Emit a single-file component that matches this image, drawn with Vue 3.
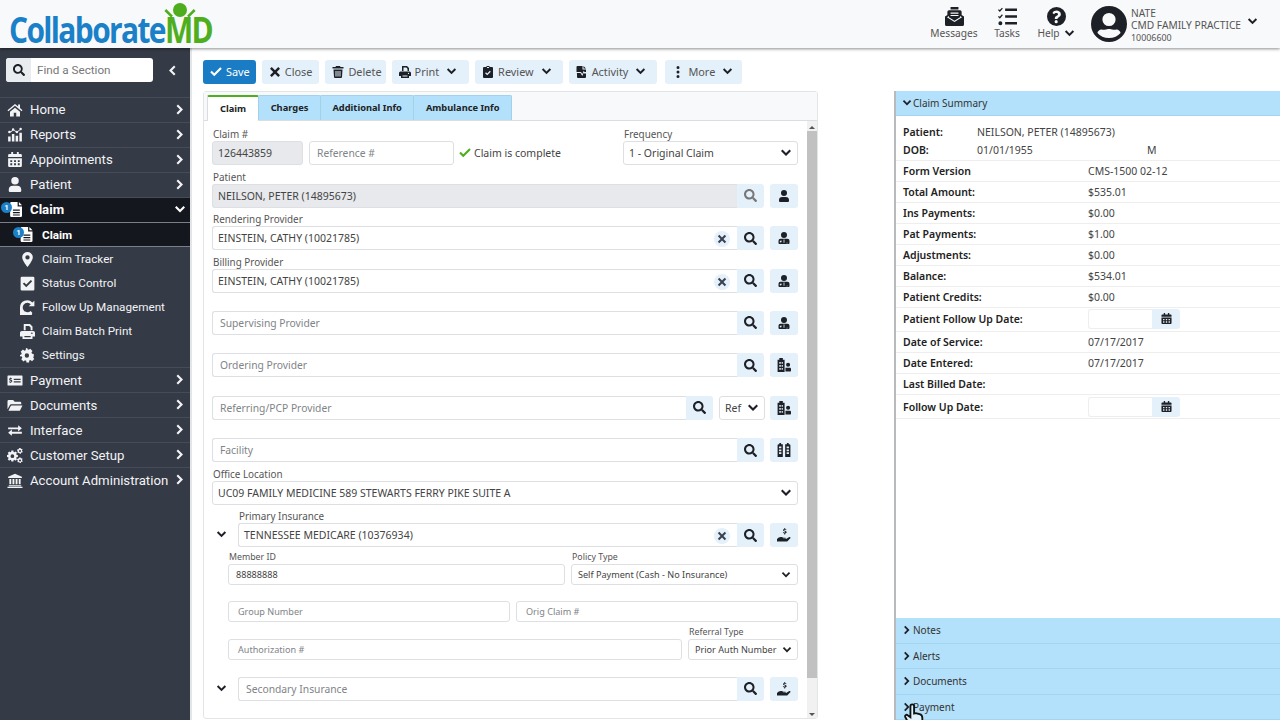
<script setup>
const ic = {
  search: 'M23.7 20.7l-4.7-4.7c-.2-.2-.5-.3-.8-.3h-.8c1.3-1.7 2.1-3.7 2.1-6C19.5 4.4 15.1 0 9.8 0S0 4.4 0 9.8s4.4 9.8 9.8 9.8c2.3 0 4.3-.8 6-2.1v.8c0 .3.1.6.3.8l4.7 4.7c.4.4 1.2.4 1.6 0l1.3-1.3c.4-.5.4-1.2 0-1.8zM9.8 15.8c-3.3 0-6-2.7-6-6s2.7-6 6-6 6 2.7 6 6-2.7 6-6 6z',
  home: 'M12 3L0 13l1.4 1.7L12 6l10.6 8.7L24 13l-4-3.3V4h-3v3.2zM4 15.5V23h6v-6h4v6h6v-7.5L12 9z',
  reports: 'M1 15h4v8H1zM7 11h4v12H7zM13 14h4v9h-4zM19 9h4v14h-4zM3 10a2 2 0 110-4 2 2 0 010 4zm6-4a2 2 0 110-4 2 2 0 010 4zm6 4a2 2 0 110-4 2 2 0 010 4zm6-5a2 2 0 110-4 2 2 0 010 4zM3.6 8L9.5 3.6l5.5 4L21 2.6l.8 1-6.8 5.7-5.5-4-5 3.7z',
  calendar: 'M6 0h3v3h6V0h3v3h3a2 2 0 012 2v3H1V5a2 2 0 012-2h3zM1 10h22v12a2 2 0 01-2 2H3a2 2 0 01-2-2zm3.5 3v3h3v-3zm6 0v3h3v-3zm6 0v3h3v-3zm-12 5v3h3v-3zm6 0v3h3v-3zm6 0v3h3v-3z',
  user: 'M12 12a6 6 0 100-12 6 6 0 000 12zm-3.5 2C4.4 14 2 16.500 2 20v1.500C2 23 3 24 4.500 24h15c1.500 0 2.500-1 2.500-2.500V20c0-3.500-2.400-6-6.500-6z',
  doc: 'M3 0h10v7h7v15a2 2 0 01-2 2H3a2 2 0 01-2-2V2a2 2 0 012-2zm12 0l5 5h-5zM5.500 12v2h11v-2zm0 4v2h11v-2zm0 4v1.500h11V20z',
  pin: 'M12 0C7 0 3.500 3.800 3.500 8.500 3.500 14 12 24 12 24s8.500-10 8.500-15.500C20.500 3.800 17 0 12 0zm0 12a3.500 3.500 0 110-7 3.500 3.500 0 010 7z',
  checkbox: 'M3 1h18a2 2 0 012 2v18a2 2 0 01-2 2H3a2 2 0 01-2-2V3a2 2 0 012-2zm7 17l9.500-9.500L17.300 6.300 10 13.600 6.700 10.300 4.500 12.500z',
  redo: 'M23 1v9h-9l3.200-3.200A7.800 7.800 0 0012 4.500a7.500 7.500 0 105 13l2.600 2.700A11.300 11.300 0 110 12 11.500 11.500 0 0119.800 4l3.200-3z',
  print: 'M6 0h10l4 4v6h-3V5.500L14.500 3H9v7H6zM3 11h18a3 3 0 013 3v6h-4v4H4v-4H0v-6a3 3 0 013-3zm4 8v2h10v-2zm12-5.500a1.300 1.300 0 100 2.600 1.300 1.300 0 000-2.600z',
  cog: 'M22 14.500v-5l-2.900-.5c-.2-.7-.4-1.300-.8-1.900l1.700-2.400-3.600-3.600-2.400 1.700c-.6-.4-1.200-.6-1.900-.8L11.600 0h-.1L9.500.5l-.5 2.900c-.7.2-1.300.4-1.900.8L4.700 2.500 1.100 6.100l1.700 2.400c-.4.6-.6 1.200-.8 1.900L0 11v2l2.900.5c.2.700.4 1.300.8 1.900l-1.700 2.400 3.600 3.600 2.400-1.700c.6.400 1.200.6 1.900.8l.5 2.500h4l.5-2.900c.7-.2 1.300-.4 1.900-.8l2.400 1.700 3.600-3.600-1.700-2.400c.4-.6.6-1.200.8-1.900zM11 15.500a3.500 3.500 0 110-7 3.500 3.500 0 010 7z',
  bill: 'M1 4h22a1 1 0 011 1v14a1 1 0 01-1 1H1a1 1 0 01-1-1V5a1 1 0 011-1zm9 5v2h11V9zm0 4v2h11v-2zM4.500 7v1.100C3.300 8.400 2.600 9.200 2.600 10.200c0 2.400 3.500 1.700 3.500 2.900 0 .5-.6.7-1.200.7-.6 0-1.200-.3-1.700-.7l-.8 1.200c.6.500 1.300.8 2.100.9V16h1.300v-1c1.200-.3 1.900-1.100 1.900-2.100 0-2.500-3.500-1.800-3.500-2.900 0-.4.500-.6 1-.6s1 .2 1.400.5l.8-1.100c-.5-.4-1.100-.7-1.700-.8V7z',
  folder: 'M2 3h7l2.500 3H20a2 2 0 012 2v2H6.500c-1.400 0-2.500.7-3.100 1.900L0 18V5a2 2 0 012-2zm4.500 9H24l-3.800 7.600c-.3.600-.9.900-1.500.9H1.500l3.600-7.600c.3-.6.800-.9 1.400-.9z',
  swap: 'M1 7h16V3.500L23 8.500l-6 5V10H1zM23 14H7v-3.500L1 15.500l6 5V17h16z',
  cogs: 'M6.200 4h3.200l.4 2.200 1.300.5 1.800-1.300 2.300 2.300-1.300 1.800.5 1.300 2.200.4v3.200l-2.200.4-.5 1.300 1.300 1.800-2.300 2.300-1.800-1.300-1.300.5-.4 2.200H6.200l-.4-2.200-1.300-.5-1.800 1.300L.4 18l1.300-1.800-.5-1.300L-1 14.500v-3.200l2.200-.4.500-1.300L.4 7.800l2.300-2.300 1.800 1.300 1.300-.5zM7.800 10a3 3 0 100 6 3 3 0 000-6zM19 0h2l.3 1.200 1 .5 1.100-.6.600 1.700-.8.900.1 1.100 1 .7-.7 1.800-1.200-.2-.8.7-.1 1.300h-2l-.4-1.200-1-.5-1.100.6-1.300-1.400.7-1 -.2-1.100-1.100-.6.700-1.800 1.200.2.800-.8zm1 3.200a1.600 1.600 0 100 3.200 1.600 1.600 0 000-3.200zM19 15h2l.3 1.200 1 .5 1.100-.6.600 1.700-.8.900.1 1.100 1 .7-.7 1.800-1.200-.2-.8.7-.1 1.300h-2l-.4-1.200-1-.5-1.100.6-1.300-1.400.7-1-.2-1.100-1.100-.6.700-1.800 1.200.2.800-.8zm1 3.200a1.600 1.600 0 100 3.200 1.600 1.600 0 000-3.200z',
  bank: 'M12 1L1 6v2h22V6zM3 9.500h3V18H3zm5 0h3V18H8zm5 0h3V18h-3zm5 0h3V18h-3zM2 19.500h20V21H2zM0 22h24v2H0z',
  trash: 'M8 0h8l1 2h6v3H1V2h6zM3 7h18l-1 15a2 2 0 01-2 2H6a2 2 0 01-2-2zm4 3v11h2V10zm4 0v11h2V10zm4 0v11h2V10z',
  clip: 'M9 0h6v2h5a2 2 0 012 2v18a2 2 0 01-2 2H4a2 2 0 01-2-2V4a2 2 0 012-2h5zm1 2v2h4V2zM10.500 18.500l7-7-1.800-1.800-5.200 5.200L8 12.500l-1.800 1.800z',
  activity: 'M4 0h9v7h7v5h-3l-1.500-2.500L12.500 16 10 12H1V2a2 2 0 012-2zm11 0l5 5h-5zM1 14h7.900l3.600 6 3.100-6.500 .7 1.500H20v7a2 2 0 01-2 2H4a2 2 0 01-2-2v-7z',
  dots: 'M12 0a3 3 0 110 6 3 3 0 010-6zm0 9a3 3 0 110 6 3 3 0 010-6zm0 9a3 3 0 110 6 3 3 0 010-6z',
  msg: 'M7 0h10v3H7zM5 4h14a2 2 0 012 2v4l3 2v10a2 2 0 01-2 2H2a2 2 0 01-2-2V12l3-2V6a2 2 0 012-2zm2 3v1.500h10V7zm0 3v1.500h10V10zM2.500 13L12 19l9.500-6-2.500-1.500V13l-7 4.300L5 13v-1.500z',
  tasks: 'M9 2h15v3H9zM9 10.500h15v3H9zM9 19h15v3H9zM1 2.800l1.200 1.100L5 .8l1.100 1L2.300 6.200 0 3.900zM1 11.300l1.200 1.100L5 9.300l1.100 1L2.300 14.700 0 12.400zM3 18a2.500 2.500 0 110 5 2.500 2.500 0 010-5z',
  help: 'M12 0a12 12 0 110 24 12 12 0 010-24zm.3 4.500c-2.500 0-4.200 1.100-5.400 3l2 1.500c.8-1 1.400-1.500 2.900-1.500 1 0 2.100.6 2.100 1.500 0 1.900-4.100 1.800-4.100 5.500v.5h3.400c0-2.200 4.300-2.300 4.300-6 0-3-3-4.500-5.200-4.500zm-.7 12a2 2 0 100 4 2 2 0 000-4z',
  avatar: 'M12 0a12 12 0 110 24 12 12 0 010-24zm0 4.600a4.400 4.400 0 100 8.800 4.400 4.400 0 000-8.800zm0 10.800c-1 0-1.500.4-3 .4-1 0-1.700-.2-2.100-.2-1.200 0-2.600 1.200-2.600 2.400 1.700 2 4.500 3.400 7.700 3.400s6-1.400 7.700-3.400c0-1.200-1.400-2.400-2.600-2.400-.4 0-1.100.2-2.100.2-1.500 0-2-.4-3-.4z',
  doctor: 'M12 0a6 6 0 110 12 6 6 0 010-12zM5 13.500h14a4 4 0 014 4V22a2 2 0 01-2 2H3a2 2 0 01-2-2v-4.500a4 4 0 014-4zm2 3.500a2.700 2.700 0 00-2.700 4.500H7a1.200 1.200 0 110-.1zm10 0a2.700 2.700 0 012.700 4.500H17a1.200 1.200 0 100-.1zM11.200 15v6.500h1.600V15z',
  building: 'M1 3h3V0h6v3h3v21H1zm3 4v3h2.500V7zm4 0v3h2V7zm-4 5v3h2.500v-3zm4 0v3h2v-3zm-4 5v3h2.500v-3zm4 0v3h2v-3zM19 8a3.500 3.500 0 110 7 3.500 3.500 0 010-7zm-4.500 8.500h7.500c1.200 0 2 .8 2 2V22a1 1 0 01-1 1h-8.500z',
  facility: 'M4 0h3v2h3v22H1V4a2 2 0 012-2h1zM3.500 6v3h4V6zm0 5v3h4v-3zm0 5v3h4v-3zM17 0h3v2h1a2 2 0 012 2v20h-9V2h3zM16.500 6v3h4V6zm0 5v3h4v-3zm0 5v3h4v-3z',
  payer: 'M12.500 0h1.500v1.500c1 .2 1.800.7 2.300 1.300l-1 1c-.5-.5-1.100-.8-1.800-.8-.7 0-1.200.3-1.200.8 0 1.300 4.200.7 4.200 3.400 0 1.100-.9 1.900-2.500 2.100V11h-1.500V9.300c-1.100-.2-2-.7-2.600-1.500l1.100-1c.5.600 1.300 1 2 1 .8 0 1.300-.3 1.300-.800 0-1.300-4.100-.7-4.100-3.400 0-1 .9-1.900 2.300-2.100zM0 23v-4c2-2 4-3.500 6.500-3.500 2 0 3 1 5 1h3c1 0 1 1.800 0 1.800h-4v.7h5l5.500-3.500c1.500-.8 3 1 1.800 2L17.500 23z',
  check: 'M8.500 20.500L.5 12.500l3-3 5 5L20.500 2.500l3 3z',
  x: 'M2 5.500L5.500 2 12 8.500 18.500 2 22 5.500 15.500 12l6.500 6.500L18.500 22 12 15.500 5.500 22 2 18.500 8.500 12z',
  down: 'M2 8l10 10 10-10-3-3-7 7-7-7z',
  right: 'M8 2l10 10-10 10-3-3 7-7-7-7z',
  left: 'M16 2L6 12l10 10 3-3-7-7 7-7z',
  hand: 'M9 1a2 2 0 012 2v8l1.500-.4 1.500.2 1.500.4 1.500.3c2 .5 3 2 3 4v4c0 2-1 4.500-3 4.500H8c-1 0-2-1-3-2.500L1.500 15c-1-2 1-3.500 2.500-2.200L7 15V3a2 2 0 012-2z'
}
const menu1 = [
  ['Home', 'home'], ['Reports', 'reports'], ['Appointments', 'calendar'], ['Patient', 'user']
]
const sub = [
  ['Claim Tracker', 'pin'], ['Status Control', 'checkbox'], ['Follow Up Management', 'redo'],
  ['Claim Batch Print', 'print'], ['Settings', 'cog']
]
const menu2 = [
  ['Payment', 'bill'], ['Documents', 'folder'], ['Interface', 'swap'], ['Customer Setup', 'cogs'], ['Account Administration', 'bank']
]
const tabs = ['Claim', 'Charges', 'Additional Info', 'Ambulance Info']
const tools = [
  ['Delete', 'trash', false], ['Print', 'print', true], ['Review', 'clip', true], ['Activity', 'activity', true], ['More', 'dots', true]
]
const providers = [
  { label: 'Rendering Provider', value: 'EINSTEIN, CATHY (10021785)', icon: 'doctor', clear: true },
  { label: 'Billing Provider', value: 'EINSTEIN, CATHY (10021785)', icon: 'doctor', clear: true },
  { ph: 'Supervising Provider', icon: 'doctor' },
  { ph: 'Ordering Provider', icon: 'building' }
]
const summary = [
  ['Form Version', 'CMS-1500 02-12'], ['Total Amount:', '$535.01'], ['Ins Payments:', '$0.00'], ['Pat Payments:', '$1.00'],
  ['Adjustments:', '$0.00'], ['Balance:', '$534.01'], ['Patient Credits:', '$0.00']
]
const sections = ['Notes', 'Alerts', 'Documents', 'Payment']
</script>

<template>
  <div class="page">
    <header class="top">
      <div class="logo">
        <div class="logo-txt"><span class="logo-blue">Collaborate</span><span class="logo-green">MD</span></div>
        <svg class="logo-man" viewBox="0 0 48 24"><circle cx="24" cy="12" r="8.500" /><path d="M2 12l10 10M46 12L36 22" /></svg>
      </div>
      <div class="top-actions">
        <div class="top-act">
          <svg class="ti" viewBox="0 0 24 24"><path :d="ic.msg" /></svg><span>Messages</span>
        </div>
        <div class="top-act tasks">
          <svg class="ti" viewBox="0 0 24 24"><path :d="ic.tasks" /></svg><span>Tasks</span>
        </div>
        <div class="top-act help">
          <svg class="ti" viewBox="0 0 24 24"><path :d="ic.help" /></svg>
          <span>Help <svg class="chev" viewBox="0 0 24 24"><path :d="ic.down" /></svg></span>
        </div>
        <div class="acct">
          <svg class="avatar" viewBox="0 0 24 24"><path :d="ic.avatar" /></svg>
          <div class="acct-txt">
            <div>NATE</div>
            <div>CMD FAMILY PRACTICE</div>
            <div class="acct-id">10006600</div>
          </div>
          <svg class="chev acct-chev" viewBox="0 0 24 24"><path :d="ic.down" /></svg>
        </div>
      </div>
    </header>

    <div class="body">
      <aside class="side">
        <div class="side-search">
          <div class="find">
            <span class="find-ic"><svg viewBox="0 0 24 24"><path :d="ic.search" /></svg></span>
            <span class="find-ph">Find a Section</span>
          </div>
          <svg class="side-back" viewBox="0 0 24 24"><path :d="ic.left" /></svg>
        </div>
        <nav class="nav">
          <div v-for="m in menu1" :key="m[0]" class="nav-row">
            <svg class="nav-ic" viewBox="0 0 24 24"><path :d="ic[m[1]]" /></svg>
            <span class="nav-t">{{ m[0] }}</span>
            <svg class="nav-ch" viewBox="0 0 24 24"><path :d="ic.right" /></svg>
          </div>
          <div class="nav-row on">
            <span class="nav-ic-w">
              <svg class="nav-ic" viewBox="0 0 24 24"><path :d="ic.doc" /></svg><b class="badge">1</b>
            </span>
            <span class="nav-t">Claim</span>
            <svg class="nav-ch" viewBox="0 0 24 24"><path :d="ic.down" /></svg>
          </div>
          <div class="sub-row on2">
            <span class="nav-ic-w">
              <svg class="sub-ic" viewBox="0 0 24 24"><path :d="ic.doc" /></svg><b class="badge">1</b>
            </span>
            <span>Claim</span>
          </div>
          <div v-for="s in sub" :key="s[0]" class="sub-row">
            <span class="nav-ic-w"><svg class="sub-ic" viewBox="0 0 24 24"><path :d="ic[s[1]]" /></svg></span>
            <span>{{ s[0] }}</span>
          </div>
          <div v-for="m in menu2" :key="m[0]" class="nav-row">
            <svg class="nav-ic" viewBox="0 0 24 24"><path :d="ic[m[1]]" /></svg>
            <span class="nav-t">{{ m[0] }}</span>
            <svg class="nav-ch" viewBox="0 0 24 24"><path :d="ic.right" /></svg>
          </div>
        </nav>
      </aside>

      <main class="main">
        <div class="work">
          <div class="toolbar">
            <button class="btn primary"><svg viewBox="0 0 24 24"><path :d="ic.check" /></svg>Save</button>
            <button class="btn"><svg viewBox="0 0 24 24"><path :d="ic.x" /></svg>Close</button>
            <button v-for="t in tools" :key="t[0]" class="btn" :class="t[0].toLowerCase()">
              <svg viewBox="0 0 24 24"><path :d="ic[t[1]]" /></svg>{{ t[0] }}
              <svg v-if="t[2]" class="btn-ch" viewBox="0 0 24 24"><path :d="ic.down" /></svg>
            </button>
          </div>

          <section class="card">
            <div class="tabs">
              <div v-for="(t, i) in tabs" :key="t" class="tab" :class="{ act: i === 0 }">{{ t }}</div>
            </div>
            <div class="card-body">
              <div class="form">
                <div class="row claim-row">
                  <div class="f f-claim"><label>Claim #</label><div class="inp dis">126443859</div></div>
                  <div class="f f-ref"><div class="inp ph">Reference #</div></div>
                  <div class="complete"><svg viewBox="0 0 24 24"><path :d="ic.check" /></svg>Claim is complete</div>
                  <div class="f f-freq">
                    <label>Frequency</label>
                    <div class="inp sel">1 - Original Claim<svg class="sel-ch" viewBox="0 0 24 24"><path :d="ic.down" /></svg></div>
                  </div>
                </div>

                <div class="row">
                  <div class="f grow">
                    <label>Patient</label>
                    <div class="group">
                      <div class="inp dis joined">NEILSON, PETER (14895673)</div>
                      <span class="sq join light"><svg viewBox="0 0 24 24"><path :d="ic.search" /></svg></span>
                    </div>
                  </div>
                  <span class="sq slim"><svg viewBox="0 0 24 24"><path :d="ic.user" /></svg></span>
                </div>

                <div v-for="p in providers" :key="p.label || p.ph" class="row">
                  <div class="f grow">
                    <label v-if="p.label">{{ p.label }}</label>
                    <div class="group">
                      <div class="inp joined" :class="{ ph: p.ph }">
                        {{ p.value || p.ph }}
                        <span v-if="p.clear" class="clear"><svg viewBox="0 0 24 24"><path :d="ic.x" /></svg></span>
                      </div>
                      <span class="sq join"><svg viewBox="0 0 24 24"><path :d="ic.search" /></svg></span>
                    </div>
                  </div>
                  <span class="sq" :class="{ slim: p.icon === 'doctor' }"><svg viewBox="0 0 24 24"><path :d="ic[p.icon]" /></svg></span>
                </div>

                <div class="row">
                  <div class="f grow">
                    <div class="group">
                      <div class="inp joined ph">Referring/PCP Provider</div>
                      <span class="sq join"><svg viewBox="0 0 24 24"><path :d="ic.search" /></svg></span>
                    </div>
                  </div>
                  <div class="inp sel ref-sel">Ref<svg class="sel-ch" viewBox="0 0 24 24"><path :d="ic.down" /></svg></div>
                  <span class="sq"><svg viewBox="0 0 24 24"><path :d="ic.building" /></svg></span>
                </div>

                <div class="row">
                  <div class="f grow">
                    <div class="group">
                      <div class="inp joined ph">Facility</div>
                      <span class="sq join"><svg viewBox="0 0 24 24"><path :d="ic.search" /></svg></span>
                    </div>
                  </div>
                  <span class="sq"><svg viewBox="0 0 24 24"><path :d="ic.facility" /></svg></span>
                </div>

                <div class="row">
                  <div class="f grow">
                    <label>Office Location</label>
                    <div class="inp sel">UC09 FAMILY MEDICINE 589 STEWARTS FERRY PIKE SUITE A<svg class="sel-ch" viewBox="0 0 24 24"><path :d="ic.down" /></svg></div>
                  </div>
                </div>

                <div class="row">
                  <svg class="ins-ch" viewBox="0 0 24 24"><path :d="ic.down" /></svg>
                  <div class="f grow">
                    <label>Primary Insurance</label>
                    <div class="group">
                      <div class="inp joined">TENNESSEE MEDICARE (10376934)
                        <span class="clear"><svg viewBox="0 0 24 24"><path :d="ic.x" /></svg></span>
                      </div>
                      <span class="sq join"><svg viewBox="0 0 24 24"><path :d="ic.search" /></svg></span>
                    </div>
                  </div>
                  <span class="sq"><svg viewBox="0 0 24 24"><path :d="ic.payer" /></svg></span>
                </div>

                <div class="row small r-member">
                  <div class="f grow"><label>Member ID</label><div class="inp">88888888</div></div>
                  <div class="f f-policy">
                    <label>Policy Type</label>
                    <div class="inp sel">Self Payment (Cash - No Insurance)<svg class="sel-ch" viewBox="0 0 24 24"><path :d="ic.down" /></svg></div>
                  </div>
                </div>
                <div class="row small r-group">
                  <div class="f grow"><div class="inp ph">Group Number</div></div>
                  <div class="f grow"><div class="inp ph">Orig Claim #</div></div>
                </div>
                <div class="row small r-auth">
                  <div class="f grow"><div class="inp ph">Authorization #</div></div>
                  <div class="f f-type">
                    <label>Referral Type</label>
                    <div class="inp sel">Prior Auth Number<svg class="sel-ch" viewBox="0 0 24 24"><path :d="ic.down" /></svg></div>
                  </div>
                </div>

                <div class="row r-sec">
                  <svg class="ins-ch" viewBox="0 0 24 24"><path :d="ic.down" /></svg>
                  <div class="f grow">
                    <div class="group">
                      <div class="inp joined ph">Secondary Insurance</div>
                      <span class="sq join"><svg viewBox="0 0 24 24"><path :d="ic.search" /></svg></span>
                    </div>
                  </div>
                  <span class="sq"><svg viewBox="0 0 24 24"><path :d="ic.payer" /></svg></span>
                </div>
              </div>
              <div class="scroll">
                <span class="arrow up"></span>
                <span class="thumb"></span>
                <span class="arrow dn"></span>
              </div>
            </div>
          </section>
        </div>

        <section class="panel">
          <div class="acc acc-top">
            <svg viewBox="0 0 24 24"><path :d="ic.down" /></svg>Claim Summary
          </div>
          <div class="sum">
            <div class="pat">
              <div class="pat-r"><b>Patient:</b><span>NEILSON, PETER (14895673)</span></div>
              <div class="pat-r"><b>DOB:</b><span class="dob">01/01/1955</span><span>M</span></div>
            </div>
            <div v-for="s in summary" :key="s[0]" class="sr"><b>{{ s[0] }}</b><span>{{ s[1] }}</span></div>
            <div class="sr tall up">
              <b>Patient Follow Up Date:</b>
              <div class="date"><i></i><span class="date-btn"><svg viewBox="0 0 24 24"><path :d="ic.calendar" /></svg></span></div>
            </div>
            <div class="sr"><b>Date of Service:</b><span>07/17/2017</span></div>
            <div class="sr"><b>Date Entered:</b><span>07/17/2017</span></div>
            <div class="sr"><b>Last Billed Date:</b><span></span></div>
            <div class="sr tall">
              <b>Follow Up Date:</b>
              <div class="date"><i></i><span class="date-btn"><svg viewBox="0 0 24 24"><path :d="ic.calendar" /></svg></span></div>
            </div>
          </div>
          <div class="accs">
            <div v-for="s in sections" :key="s" class="acc">
              <svg viewBox="0 0 24 24"><path :d="ic.right" /></svg>{{ s }}
            </div>
          </div>
          <svg class="hand" viewBox="0 0 24 24"><path :d="ic.hand" /></svg>
        </section>
      </main>
    </div>
  </div>
</template>

<style>
html, body { margin: 0; background: #fff; }
</style>

<style scoped>
.page { width: 1280px; height: 720px; overflow: hidden; display: flex; flex-direction: column; font-family: "Noto Sans", "Open Sans", sans-serif; font-size: 10.500px; color: #444; position: relative; }
svg { fill: currentColor; display: block; flex: none; }

.top { height: 48px; flex: none; background: #f8f9fa; display: flex; justify-content: space-between; box-shadow: 0 1px 3px rgba(0,0,0,.45); position: relative; z-index: 2; }
.logo { position: relative; padding: 8px 0 0 9px; width: 240px; box-sizing: border-box; font-family: "Open Sans", sans-serif; font-size: 35px; font-weight: 700; letter-spacing: -1.9px; line-height: 44px; white-space: nowrap; }
.logo-txt { transform: scaleX(.855); transform-origin: left center; }
.logo-blue { color: #1a80c8; }
.logo-green { color: #4eae1e; }
.logo-man { position: absolute; left: 164px; top: 2px; width: 32px; height: 16px; fill: #4eae1e; stroke: #4eae1e; stroke-width: 4; overflow: visible; }
.top-actions { display: flex; align-items: center; color: #555; font-size: 10.200px; }
.top-act { display: flex; flex-direction: column; align-items: center; width: 44px; margin-right: 9px; }
.top-act.tasks { margin-right: 5px; }
.top-act.help { margin-right: 13px; }
.top-act span { display: flex; align-items: center; gap: 4px; white-space: nowrap; line-height: 15px; margin-top: 0; }
.ti { width: 19px; height: 19px; color: #1d2026; }
.chev { width: 11px; height: 11px; color: #1d2026; }
.acct { display: flex; align-items: center; margin-right: 22px; }
.avatar { width: 36px; height: 36px; color: #1d2026; margin-right: 4px; }
.acct-txt { font-size: 10.200px; line-height: 12.500px; padding-top: 3px; white-space: nowrap; }
.acct-id { font-size: 8.900px; }
.acct-chev { margin-left: 6px; margin-top: -5px; }

.body { flex: 1; display: flex; min-height: 0; }
.side { width: 192px; box-sizing: border-box; flex: none; background: #343a46; color: #f2f3f5; border-right: 2px solid #e4e5e7; font-family: Roboto, sans-serif; }
.side-search { display: flex; align-items: center; padding: 10px 0 0 6px; height: 24px; }
.find { width: 147px; height: 24px; background: #fff; border-radius: 3px; display: flex; align-items: center; overflow: hidden; }
.find-ic { width: 25px; height: 24px; background: #e9ecef; color: #1d2026; display: flex; align-items: center; justify-content: center; margin-right: 6px; }
.find-ic svg { width: 12px; height: 12px; }
.find-ph { color: #777; font-size: 11.700px; }
.side-back { width: 12px; height: 13px; margin-left: 13px; color: #f2f3f5; }
.nav { margin-top: 14.500px; }
.nav-row { height: 24px; display: flex; align-items: center; border-top: 1px solid #454b57; font-size: 13.200px; padding-left: 7px; position: relative; }
.nav-ic { width: 16px; height: 15px; }
.nav-t { margin-left: 7px; white-space: nowrap; }
.nav-ch { width: 12px; height: 13px; position: absolute; right: 4px; top: 5px; }
.nav-ic-w { position: relative; display: block; }
.nav-row.on { background: #14171d; font-weight: 700; color: #fff; padding-left: 9px; height: 24.500px; }
.nav-row.on .nav-t { margin-left: 5px; }
.badge { position: absolute; left: -8px; top: 0; width: 11px; height: 11px; border-radius: 50%; background: #1a80c8; color: #fff; font-size: 8px; line-height: 11px; text-align: center; font-weight: 700; }
.sub-row { height: 24.100px; display: flex; align-items: center; font-size: 11.700px; padding-left: 20px; white-space: nowrap; }
.sub-ic { width: 15px; height: 15px; margin-right: 7px; }
.sub-row.on2 { background: #14171d; font-weight: 700; color: #fff; border-top: 1px solid #7a7e86; border-bottom: 1px solid #7a7e86; height: 23px; }
.sub-row .badge { left: -7px; top: 0; }

.main { flex: 1; display: flex; min-width: 0; padding-left: 11px; }
.work { width: 615px; flex: none; }
.toolbar { display: flex; gap: 6px; padding-top: 12px; height: 24px; }
.btn { height: 24px; border: 0; border-radius: 3px; background: #e4f0fa; color: #555; font: inherit; font-size: 10.900px; display: flex; align-items: center; padding: 0 7px 1px; white-space: nowrap; }
.btn svg { width: 12px; height: 12px; color: #1d2026; margin-right: 4px; }
.btn .btn-ch { margin: 0 4px 0 7px; width: 11px; height: 11px; }
.btn.more { margin-left: 2px; padding-right: 5px; }
.btn.delete { padding-right: 4px; }
.btn.print { padding-right: 8px; }
.btn.primary { background: #1a7cc4; color: #fff; padding-right: 6px; }
.btn.primary svg { color: #fff; }

.card { margin-top: 7px; height: 628px; border: 1px solid #e3e4e6; border-radius: 3px; box-sizing: border-box; display: flex; flex-direction: column; }
.tabs { height: 25px; flex: none; display: flex; background: #f8f9fa; border-bottom: 1px solid #dcdde0; padding: 3px 0 0 4px; box-sizing: content-box; }
.tab { padding: 0 11.500px 1px; display: flex; align-items: center; background: #b3e0fa; font-size: 9.300px; font-weight: 700; color: #222; border: 1px solid #a4d0ea; border-bottom: 0; margin-left: -1px; white-space: nowrap; border-radius: 2px 2px 0 0; }
.tab.act { background: #fff; border-top: 2px solid #4eae1e; border-color: #dcdde0; border-top-color: #4eae1e; margin-bottom: -1px; padding: 0 12px 1px; }
.card-body { flex: 1; display: flex; min-height: 0; }
.form { flex: 1; min-width: 0; padding: 0 9px 0 8px; }
.scroll { width: 10px; flex: none; background: #f1f1f1; display: flex; flex-direction: column; align-items: center; }
.thumb { width: 10px; height: 547px; background: #c1c1c1; }
.arrow { width: 0; height: 0; border-left: 3px solid transparent; border-right: 3px solid transparent; margin: 5px 0 0; }
.arrow.up { border-bottom: 3px solid #555; margin-bottom: 2px; }
.arrow.dn { border-top: 3px solid #555; margin-top: auto; margin-bottom: 2px; }

.row { height: 42.450px; display: flex; align-items: flex-end; gap: 6px; }
.claim-row { height: 44.200px; }
.f { display: flex; flex-direction: column; min-width: 0; }
.grow { flex: 1 1 0; }
.f label { font-size: 9.900px; line-height: 14px; color: #555; white-space: nowrap; padding-left: 1px; }
.group { display: flex; }
.inp { height: 24px; box-sizing: border-box; border: 1px solid #dedfe2; border-radius: 3px; background: #fff; padding: 0 5px; display: flex; align-items: center; font-size: 10.500px; color: #444; white-space: nowrap; position: relative; }
.inp.ph { color: #808488; padding-left: 7px; font-size: 10.300px; }
.inp.dis { background: #e7e9ec; }
.joined { flex: 1; border-radius: 3px 0 0 3px; border-right: 0; min-width: 0; }
.sel { justify-content: space-between; }
.sel-ch { width: 12px; height: 12px; color: #1d2026; margin-left: 6px; }
.sq { width: 28px; height: 24px; background: #e4f0fa; border-radius: 3px; display: flex; align-items: center; justify-content: center; color: #1d2026; flex: none; }
.sq svg { width: 14px; height: 14px; }
.sq.slim svg { width: 12px; height: 12px; }
.sq.join { width: 27px; border-radius: 0 3px 3px 0; }
.sq.join svg { width: 13px; height: 13px; }
.sq.light { color: #777; }
.clear { position: absolute; right: 7px; top: 4px; width: 16px; height: 16px; border-radius: 50%; background: #e4f0fa; color: #3a4250; display: flex; align-items: center; justify-content: center; }
.clear svg { width: 10px; height: 10px; }
.f-claim { width: 91px; flex: none; }
.f-ref { width: 145px; flex: none; }
.complete { width: 157px; flex: none; display: flex; align-items: center; height: 24px; font-size: 10.500px; color: #444; white-space: nowrap; margin-left: -1px; margin-right: 1px; }
.complete svg { width: 12px; height: 12px; color: #4eae1e; margin-right: 3px; }
.f-freq { width: 175px; flex: none; }
.ref-sel { width: 46px; flex: none; padding: 0 5px; margin-right: -1px; }
.ref-sel .sel-ch { margin-left: 1px; }
.ins-ch { width: 11px; height: 11px; margin: 0 5px 7px 4px; color: #1d2026; }
.small { gap: 6px; padding-left: 16px; }
.small .inp { height: 21px; font-size: 9.100px; padding: 0 9px; }
.small label { font-size: 8.800px; line-height: 13px; }
.small .sel-ch { width: 10px; height: 10px; }
.r-member { height: 38px; }
.r-member .f:first-child .inp { padding: 0 7px; }
.r-group { height: 37px; }
.r-auth { height: 38px; }
.r-sec { height: 40.500px; }
.f-policy { width: 227px; flex: none; }
.f-policy .inp { padding: 0 6px; }
.f-type { width: 110px; flex: none; }
.f-type .inp { padding: 0 6px; }

.panel { width: 386px; box-sizing: border-box; margin-left: 76px; margin-top: 43px; border-left: 2px solid #b9babc; display: flex; flex-direction: column; position: relative; color: #444; }
.acc { height: 25px; flex: none; box-sizing: border-box; background: #b3e0fa; border-bottom: 1px solid #a3d5f0; display: flex; align-items: center; font-size: 10px; color: #333; padding-left: 6px; }
.acc svg { width: 10px; height: 10px; color: #1d2026; margin-right: 1px; }
.sum { flex: 1; padding-top: 7px; font-size: 10.500px; }
.pat { border-bottom: 1px solid #eee; padding: 0 7px 1px; }
.pat-r { height: 18px; display: flex; align-items: center; }
.pat-r b { width: 74px; font-weight: 600; color: #222; }
.dob { width: 170px; }
.sr { height: 21px; box-sizing: border-box; border-bottom: 1px solid #eee; display: flex; align-items: center; padding-left: 7px; }
.sr b { width: 185px; font-weight: 600; color: #222; flex: none; }
.sr.tall { height: 24px; }
.sr.up { padding-bottom: 2px; }
.date { display: flex; width: 92px; height: 20px; border-radius: 3px; }
.date i { flex: 1; border: 1px solid #eee; border-right: 0; border-radius: 3px 0 0 3px; }
.date-btn { width: 28px; background: #e4f0fa; color: #1d2026; display: flex; align-items: center; justify-content: center; border-radius: 0 3px 3px 0; }
.date-btn svg { width: 11px; height: 11px; }
.accs { flex: none; }
.accs .acc { height: 25.500px; }
.hand { position: absolute; left: 8px; bottom: -7px; width: 22px; height: 25px; fill: #dff1fb; stroke: #111; stroke-width: 2; }
</style>
